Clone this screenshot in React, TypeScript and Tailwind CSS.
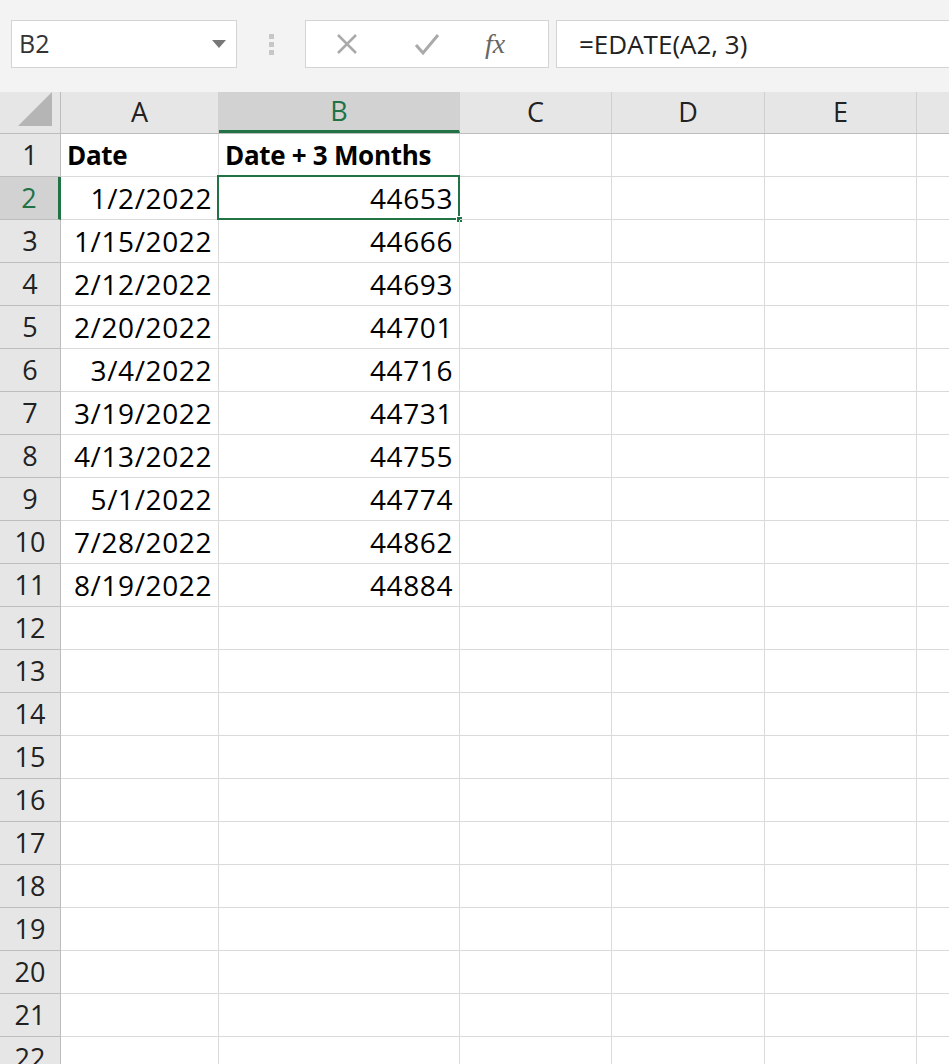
const cols = [
  { key: "A", w: "w-[158px]" },
  { key: "B", w: "w-[241px]" },
  { key: "C", w: "w-[152px]" },
  { key: "D", w: "w-[153px]" },
  { key: "E", w: "w-[152px]" },
  { key: "F", w: "w-[40px]" },
];

const dates = ["1/2/2022", "1/15/2022", "2/12/2022", "2/20/2022", "3/4/2022", "3/19/2022", "4/13/2022", "5/1/2022", "7/28/2022", "8/19/2022"];
const values = ["44653", "44666", "44693", "44701", "44716", "44731", "44755", "44774", "44862", "44884"];

export default function App() {
  const rows = Array.from({ length: 22 }, (_, i) => i + 1);
  return (
    <div className="w-[949px] h-[1064px] overflow-hidden bg-white text-black" style={{ fontFamily: '"Open Sans", "Noto Sans", sans-serif' }}>
      {/* formula bar */}
      <div className="h-[92px] bg-[#f3f3f3] flex items-start pt-[20px] pl-[11px] gap-0">
        <div className="w-[226px] h-[48px] bg-white border border-[#d4d4d4] flex items-center justify-between px-[7px]">
          <span className="text-[25px] text-[#333]">B2</span>
          <svg width="16" height="10" viewBox="0 0 16 10" className="mr-[2px]"><path d="M1 1h14L8 9z" fill="#777" /></svg>
        </div>
        <div className="w-[68px] h-[48px] flex flex-col items-center justify-center gap-[3px]">
          <div className="w-[5px] h-[5px] bg-[#c6c6c6]" />
          <div className="w-[5px] h-[5px] bg-[#c6c6c6]" />
          <div className="w-[5px] h-[5px] bg-[#c6c6c6]" />
        </div>
        <div className="w-[244px] h-[48px] bg-white border border-[#d4d4d4] flex items-center">
          <svg width="24" height="24" viewBox="0 0 24 24" className="ml-[29px]"><path d="M3 3l18 18M21 3L3 21" stroke="#aaa" strokeWidth="2.5" /></svg>
          <svg width="26" height="24" viewBox="0 0 26 24" className="ml-[55px]"><path d="M2 13l7 8L24 3" stroke="#aaa" strokeWidth="3" fill="none" /></svg>
          <span className="ml-[45px] text-[28px] italic text-[#666]" style={{ fontFamily: '"Liberation Serif", serif' }}>fx</span>
        </div>
        <div className="ml-[7px] flex-1 h-[48px] bg-white border border-[#d4d4d4] border-r-0 flex items-center pl-[22px]">
          <span className="text-[26px] text-[#222]">=EDATE(A2, 3)</span>
        </div>
      </div>
      {/* column headers */}
      <div className="flex h-[42px] bg-[#e6e6e6] border-b border-[#bdbdbd]">
        <div className="w-[61px] shrink-0 border-r border-[#bdbdbd] relative bg-[#e6e6e6]">
          <svg width="40" height="40" viewBox="0 0 40 40" className="absolute right-[4px] bottom-[3px]"><path d="M36 2V36H2z" fill="#b5b5b5" /></svg>
        </div>
        {cols.map((c) => (
          <div
            key={c.key}
            className={`${c.w} shrink-0 flex items-center justify-center text-[27px] border-r border-[#d0d0d0] ${c.key === "B" ? "bg-[#d2d2d2] text-[#217346] border-b-[3px] border-b-[#217346]" : "text-[#222]"}`}
          >
            {c.key === "F" ? "" : c.key}
          </div>
        ))}
      </div>
      {rows.map((r) => (
        <div key={r} className="flex h-[43px]">
          <div className={`w-[61px] shrink-0 flex items-center justify-center text-[27px] border-b border-[#bdbdbd] ${r === 2 ? "bg-[#d2d2d2] text-[#217346] border-r-[3px] border-r-[#217346]" : "bg-[#e6e6e6] text-[#222] border-r border-r-[#bdbdbd]"}`}>
            {r}
          </div>
          {cols.map((c) => {
            let content: string = "";
            let cls = "justify-end pr-[6px]";
            let bold = false;
            if (r === 1 && c.key === "A") { content = "Date"; cls = "justify-start pl-[6px]"; bold = true; }
            if (r === 1 && c.key === "B") { content = "Date + 3 Months"; cls = "justify-start pl-[6px]"; bold = true; }
            if (r >= 2 && r <= 11 && c.key === "A") content = dates[r - 2];
            if (r >= 2 && r <= 11 && c.key === "B") content = values[r - 2];
            const sel = r === 2 && c.key === "B";
            return (
              <div
                key={c.key}
                className={`${c.w} shrink-0 flex items-center border-r border-b border-[#dadada] relative ${cls} ${bold ? "font-bold text-[26px] tracking-[-0.3px]" : "text-[28px] tracking-[0.6px]"}`}
              >
                <span className="whitespace-nowrap">{content}</span>
                {sel && (
                  <>
                    <div className="absolute -left-[2px] -top-[2px] -right-[1px] -bottom-[1px] border-[2px] border-[#217346]" />
                    <div className="absolute -right-[4px] -bottom-[4px] w-[7px] h-[7px] bg-[#217346] border border-white" />
                  </>
                )}
              </div>
            );
          })}
        </div>
      ))}
    </div>
  );
}
